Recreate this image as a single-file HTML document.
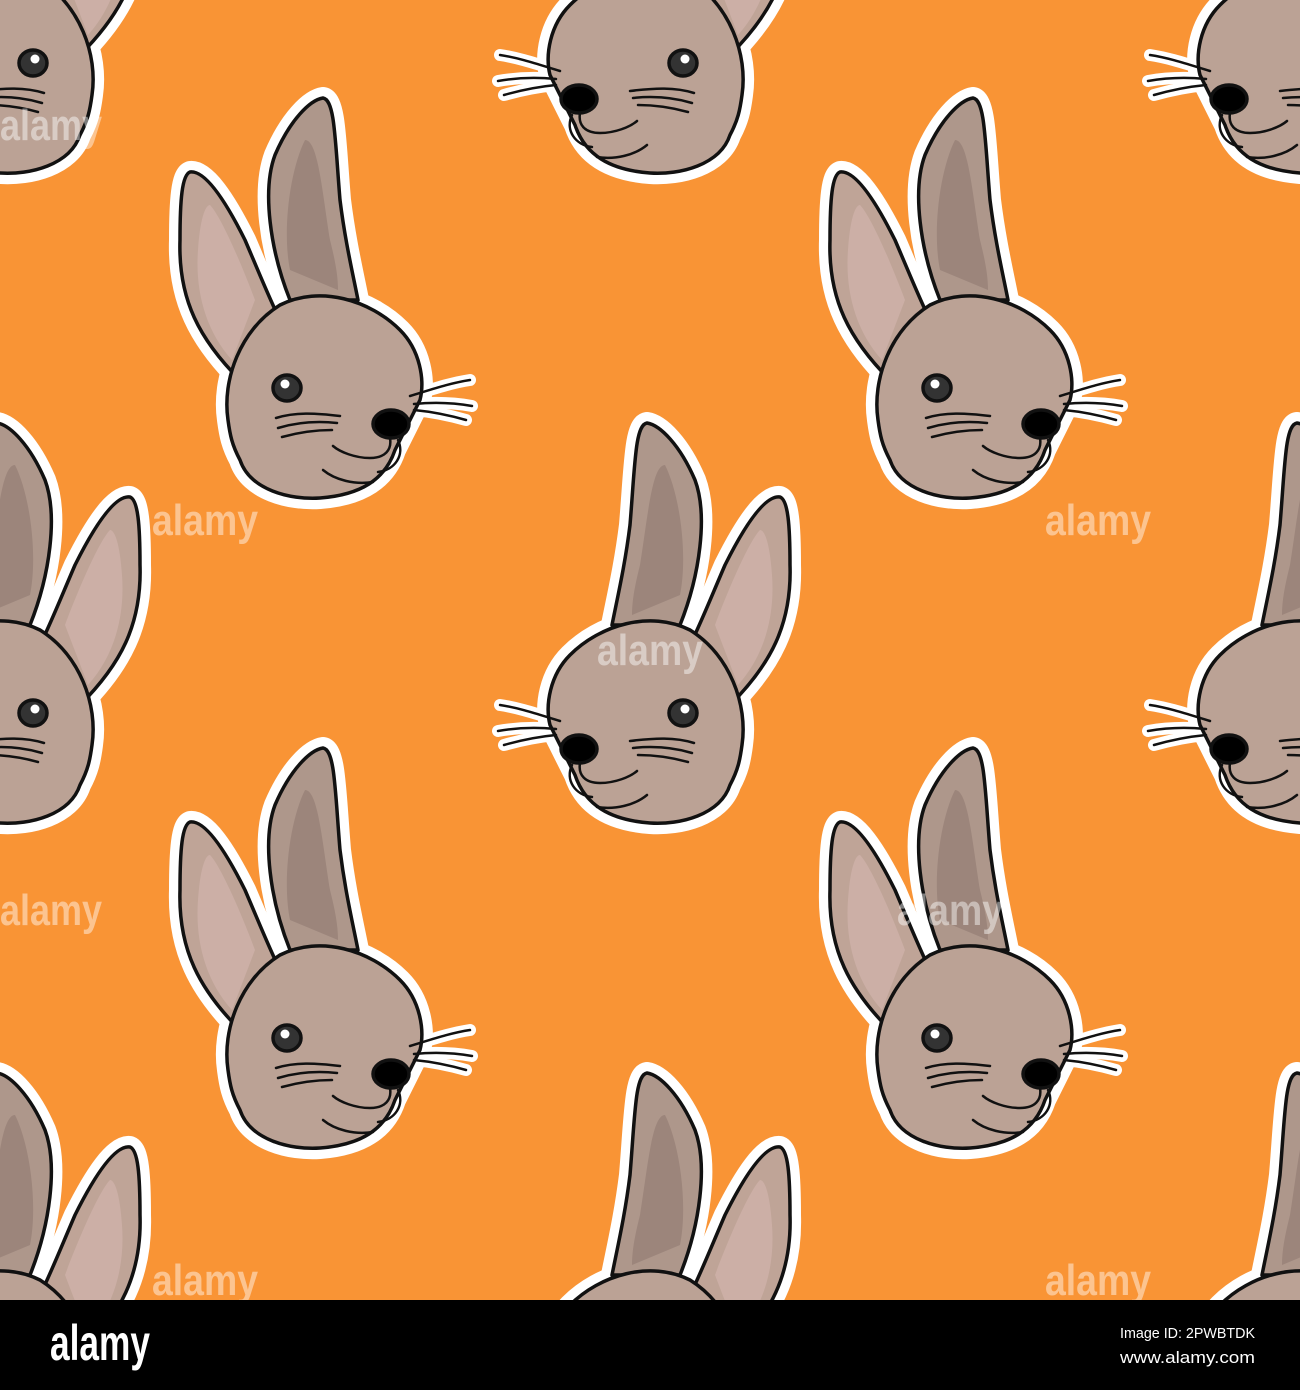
<!DOCTYPE html>
<html><head><meta charset="utf-8"><style>
html,body{margin:0;padding:0;width:1300px;height:1390px;overflow:hidden;background:#000}
svg{display:block;overflow:hidden}
</style></head><body>
<svg width="1300" height="1390" viewBox="0 0 1300 1390" xmlns="http://www.w3.org/2000/svg">
<defs>
<g id="rab">
  <g fill="#fff" stroke="#fff" stroke-width="22" stroke-linejoin="round" stroke-linecap="round">
    <path d="M290,300 C270,250 262,190 275,155 C290,120 310,100 323,98 C335,100 335,140 340,200 C345,240 352,270 358,300 Z"/>
    <path d="M240,380 C200,340 178,300 180,240 C180,200 182,175 190,172 C205,170 225,200 245,240 C260,275 270,300 280,320 Z"/>
    <path d="M228,420 C222,380 240,330 280,305 C320,285 370,300 400,330 C420,350 425,380 420,400 C410,420 400,440 395,450 C385,480 360,495 320,498 C290,500 250,490 240,460 C232,445 230,435 228,420 Z"/>
    <g fill="none" stroke-width="12">
      <path d="M410,396 C430,390 450,383 470,380"/>
      <path d="M414,404 C435,402 455,403 472,406"/>
      <path d="M414,410 C435,412 452,416 466,420"/>
    </g>
  </g>
  <g stroke="#111" stroke-width="3.5" stroke-linejoin="round" stroke-linecap="round">
    <path fill="#ae978b" d="M290,300 C270,250 262,190 275,155 C290,120 310,100 323,98 C335,100 335,140 340,200 C345,240 352,270 358,300 Z"/>
    <path fill="#9c857b" stroke="none" d="M290,270 C282,230 290,170 305,140 C318,140 322,190 330,240 C335,260 338,275 338,290 Z"/>
    <path fill="#bfa497" d="M240,380 C200,340 178,300 180,240 C180,200 182,175 190,172 C205,170 225,200 245,240 C260,275 270,300 280,320 Z"/>
    <path fill="#ccafa6" stroke="none" d="M232,360 C205,330 195,290 198,250 C200,220 205,205 210,205 C220,215 240,260 255,300 Z"/>
    <circle cx="405" cy="353" r="7" fill="#444"/>
    <path fill="#bba295" d="M228,420 C222,380 240,330 280,305 C320,285 370,300 400,330 C420,350 425,380 420,400 C410,420 400,440 395,450 C385,480 360,495 320,498 C290,500 250,490 240,460 C232,445 230,435 228,420 Z"/>
    <ellipse cx="287" cy="388" rx="14" ry="13" fill="#333"/>
    <circle cx="285" cy="384" r="4.5" fill="#fff" stroke="none"/>
    <ellipse cx="391" cy="424" rx="18" ry="14" fill="#000"/>
    <g fill="none" stroke-width="2.5">
      <path d="M276,418 C295,412 315,413 340,416"/>
      <path d="M278,428 C298,422 318,421 337,423"/>
      <path d="M282,437 C300,432 315,430 332,430"/>
      <path d="M410,396 C430,390 450,383 470,380"/>
      <path d="M414,404 C435,402 455,403 472,406"/>
      <path d="M414,410 C435,412 452,416 466,420"/>
      <path d="M390,438 C392,450 385,458 370,458 C355,458 340,452 333,446"/>
      <path d="M398,440 C405,455 395,470 378,472"/>
      <path d="M323,470 C335,480 355,485 373,482"/>
    </g>
  </g>
</g>
</defs>
<rect x="0" y="0" width="1300" height="1300" fill="#f99435"/>
<g>
  <use href="#rab"/>
  <use href="#rab" transform="translate(650,0)"/>
  <use href="#rab" transform="translate(0,650)"/>
  <use href="#rab" transform="translate(650,650)"/>
  <use href="#rab" transform="translate(970,325) scale(-1,1)"/>
  <use href="#rab" transform="translate(320,325) scale(-1,1)"/>
  <use href="#rab" transform="translate(1620,325) scale(-1,1)"/>
  <use href="#rab" transform="translate(970,-325) scale(-1,1)"/>
  <use href="#rab" transform="translate(320,-325) scale(-1,1)"/>
  <use href="#rab" transform="translate(1620,-325) scale(-1,1)"/>
  <use href="#rab" transform="translate(970,975) scale(-1,1)"/>
  <use href="#rab" transform="translate(320,975) scale(-1,1)"/>
  <use href="#rab" transform="translate(1620,975) scale(-1,1)"/>
</g>
<g fill="#fff" fill-opacity="0.45" font-family="Liberation Sans, sans-serif" font-weight="bold" font-size="44" lengthAdjust="spacingAndGlyphs">
  <text x="152" y="535" textLength="106" lengthAdjust="spacingAndGlyphs">alamy</text>
  <text x="1045" y="535" textLength="106" lengthAdjust="spacingAndGlyphs">alamy</text>
  <text x="597" y="665" textLength="106" lengthAdjust="spacingAndGlyphs">alamy</text>
  <text x="0" y="925" textLength="102" lengthAdjust="spacingAndGlyphs">alamy</text>
  <text x="897" y="925" textLength="106" lengthAdjust="spacingAndGlyphs">alamy</text>
  <text x="152" y="1295" textLength="106" lengthAdjust="spacingAndGlyphs">alamy</text>
  <text x="1045" y="1295" textLength="106" lengthAdjust="spacingAndGlyphs">alamy</text>
  <text x="0" y="140" textLength="102" lengthAdjust="spacingAndGlyphs">alamy</text>
</g>
<rect x="0" y="1300" width="1300" height="90" fill="#000"/>
<text x="50" y="1360" fill="#fff" font-family="Liberation Sans, sans-serif" font-weight="bold" font-size="50" textLength="100" lengthAdjust="spacingAndGlyphs">alamy</text>
<text x="1120" y="1338" fill="#fff" font-family="Liberation Sans, sans-serif" font-size="15" textLength="135" lengthAdjust="spacingAndGlyphs">Image ID: 2PWBTDK</text>
<text x="1120" y="1363" fill="#fff" font-family="Liberation Sans, sans-serif" font-size="17" textLength="135" lengthAdjust="spacingAndGlyphs">www.alamy.com</text>
</svg>
</body></html>
